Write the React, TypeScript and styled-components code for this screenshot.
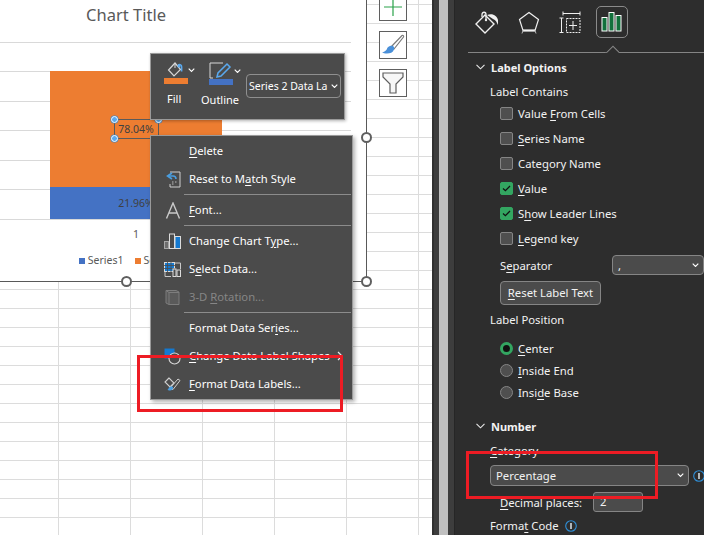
import React from "react";
import styled, { createGlobalStyle } from "styled-components";

const GlobalStyle = createGlobalStyle`
  html, body {
    margin: 0;
    padding: 0;
    width: 704px;
    height: 535px;
    overflow: hidden;
    background: #2d2d2d;
  }
  * { box-sizing: border-box; }
`;

const uiFont = `"Noto Sans", "Open Sans", sans-serif`;

const Page = styled.div`
  display: flex;
  width: 704px;
  height: 535px;
  overflow: hidden;
  position: relative;
  font-family: ${uiFont};
  font-size: 12px;
`;

/* spreadsheet side */
const Sheet = styled.div`
  position: relative;
  width: 432px;
  height: 535px;
  flex: none;
  overflow: hidden;
  background-color: #fff;
  background-image: linear-gradient(#dcdcdc 1px, transparent 1px),
    linear-gradient(90deg, #dcdcdc 1px, transparent 1px);
  background-size: 72px 19px;
  background-position: 0 4px, 58px 0;
`;

const Chart = styled.div`
  position: absolute;
  left: -115px;
  top: -10px;
  width: 482px;
  height: 292px;
  background: #fff;
  border: 1px solid #595959;
  display: flex;
  flex-direction: column;
  color: #595959;
`;

const ChartTitle = styled.div`
  height: 51px;
  padding-top: 10px;
  line-height: 28px;
  text-align: center;
  font-size: 16.5px;
`;

const Plot = styled.div`
  width: 465px;
  height: 178px;
  padding: 29px 0 0 164px;
  background: repeating-linear-gradient(#d9d9d9 0 1px, transparent 1px 29.5px);
  border-bottom: 1px solid #d9d9d9;
`;

const BarStack = styled.div`
  width: 172px;
  height: 148px;
  display: flex;
  flex-direction: column;
`;

const BarSegment = styled.div<{ $color: string; $height: number }>`
  height: ${(p) => p.$height}px;
  background: ${(p) => p.$color};
  display: flex;
  align-items: center;
  justify-content: center;
  color: #404040;
  font-size: 10.5px;
`;

const DataLabel = styled.div`
  position: relative;
  width: 45px;
  height: 20px;
  border: 1px solid #5a5a5a;
  display: flex;
  align-items: center;
  justify-content: center;
`;

const LabelHandle = styled.span<{ $x: number; $y: number }>`
  position: absolute;
  left: ${(p) => p.$x}px;
  top: ${(p) => p.$y}px;
  width: 7px;
  height: 7px;
  border-radius: 50%;
  background: #5aa9ee;
  border: 1px solid #fff;
  box-shadow: 0 0 0 0.5px #3a80c0;
`;

const AxisLabel = styled.div`
  width: 172px;
  margin-left: 164px;
  margin-top: 7px;
  text-align: center;
  font-size: 10.5px;
  line-height: 15px;
`;

const Legend = styled.div`
  display: flex;
  justify-content: center;
  gap: 11px;
  margin-top: 11px;
  padding-left: 6px;
  font-size: 10.5px;
  line-height: 15px;
`;

const LegendItem = styled.div`
  display: flex;
  align-items: center;
  gap: 3px;
`;

const Swatch = styled.span<{ $color: string }>`
  width: 6px;
  height: 6px;
  background: ${(p) => p.$color};
`;

const ChartHandle = styled.span<{ $x: number; $y: number }>`
  position: absolute;
  left: ${(p) => p.$x}px;
  top: ${(p) => p.$y}px;
  width: 11px;
  height: 11px;
  border-radius: 50%;
  background: #fff;
  border: 2px solid #5f5f5f;
`;

const SideButtons = styled.div`
  position: absolute;
  left: 379px;
  top: -7px;
  display: flex;
  flex-direction: column;
  gap: 10px;
`;

const SideButton = styled.div`
  width: 28px;
  height: 28px;
  background: #fff;
  border: 1px solid #5f5f5f;
  display: flex;
  align-items: center;
  justify-content: center;
`;

const MiniToolbar = styled.div`
  position: absolute;
  left: 150px;
  top: 53px;
  width: 195px;
  height: 67px;
  background: #4b4b4b;
  border: 1px solid #9a9a9a;
  box-shadow: 1px 1px 3px rgba(0, 0, 0, 0.3);
  display: flex;
  align-items: flex-start;
  padding: 8px 0 0 13px;
  color: #fff;
`;

const ToolBlock = styled.div<{ $width: number }>`
  width: ${(p) => p.$width}px;
  display: flex;
  flex-direction: column;
  align-items: flex-start;
`;

const ToolIconRow = styled.div<{ $gap: number; $indent: number }>`
  display: flex;
  align-items: center;
  gap: ${(p) => p.$gap}px;
  margin-left: ${(p) => p.$indent}px;
`;

const ColorBar = styled.span<{ $color: string }>`
  width: 24px;
  height: 6px;
  margin-top: -1px;
  background: ${(p) => p.$color};
`;

const ToolLabel = styled.span<{ $indent: number }>`
  margin: 6px 0 0 ${(p) => p.$indent}px;
  line-height: 18px;
  font-size: 11px;
  white-space: nowrap;
`;

const ToolCombo = styled.div`
  width: 95px;
  height: 24px;
  margin-top: 12px;
  border: 1px solid #8f8f8f;
  border-radius: 4px;
  display: flex;
  align-items: center;
  padding: 0 4px 0 2px;
  font-size: 10.5px;
  gap: 3px;
`;

const ComboText = styled.span`
  flex: 1;
  white-space: nowrap;
`;

const ContextMenu = styled.div`
  position: absolute;
  left: 150px;
  top: 135px;
  width: 203px;
  height: 265px;
  background: #4b4b4b;
  border: 1px solid #9a9a9a;
  box-shadow: 2px 2px 4px rgba(0, 0, 0, 0.3);
  padding: 1px 0;
  color: #fff;
  font-size: 11.25px;
`;

const MenuRow = styled.div<{ $disabled?: boolean }>`
  height: 28px;
  display: flex;
  align-items: center;
  color: ${(p) => (p.$disabled ? "#868686" : "#fff")};
`;

const MenuIcon = styled.span`
  width: 38px;
  flex: none;
  display: flex;
  justify-content: center;
  padding-left: 5px;
`;

const MenuText = styled.span`
  flex: 1;
  margin-top: -2px;
  white-space: nowrap;
`;

const MenuRule = styled.div`
  height: 1px;
  margin: 1px 1px 1px 33px;
  background: #8c8c8c;
`;

const Key = styled.u`
  text-underline-offset: 2px;
  text-decoration-thickness: 1px;
`;

const Callout = styled.div<{ $x: number; $y: number; $w: number; $h: number }>`
  position: absolute;
  left: ${(p) => p.$x}px;
  top: ${(p) => p.$y}px;
  width: ${(p) => p.$w}px;
  height: ${(p) => p.$h}px;
  border: 3px solid #ed1c24;
  pointer-events: none;
`;

/* divider between sheet and pane */
const Gutter = styled.div`
  width: 23px;
  flex: none;
  display: flex;
`;

const GutterBand = styled.div<{ $width: number; $color: string }>`
  width: ${(p) => p.$width}px;
  background: ${(p) => p.$color};
`;

/* format pane */
const Pane = styled.div`
  flex: 1;
  height: 535px;
  overflow: hidden;
  background: #2d2d2d;
  color: #f2f2f2;
  display: flex;
  flex-direction: column;
  font-size: 11.3px;
`;

const TabBar = styled.div`
  position: relative;
  height: 53px;
  flex: none;
  margin-left: 13px;
  border-bottom: 1px solid #858585;
  display: flex;
  align-items: flex-start;
`;

const TabIcon = styled.div<{ $width: number; $active?: boolean }>`
  width: ${(p) => p.$width}px;
  height: 32px;
  margin-top: 6px;
  margin-left: ${(p) => (p.$active ? 10 : 0)}px;
  display: flex;
  align-items: center;
  justify-content: center;
  border: 1px solid ${(p) => (p.$active ? "#8a8a8a" : "transparent")};
  border-radius: 5px;
`;

const TabNotch = styled.span`
  position: absolute;
  left: 137px;
  bottom: -1px;
  width: 14px;
  height: 9px;
  overflow: hidden;
  &::before {
    content: "";
    position: absolute;
    left: 2px;
    top: 4px;
    width: 10px;
    height: 10px;
    background: #2d2d2d;
    border: 1px solid #858585;
    transform: rotate(45deg);
  }
`;

const SectionHead = styled.div<{ $top: number }>`
  height: 20px;
  flex: none;
  margin-top: ${(p) => p.$top}px;
  padding: 0 0 2px 21px;
  display: flex;
  align-items: center;
  gap: 6px;
  font-weight: 700;
  font-size: 11px;
`;

const SubLabel = styled.div<{ $top: number }>`
  height: 17px;
  flex: none;
  line-height: 15px;
  margin-top: ${(p) => p.$top}px;
  padding-left: 35px;
`;

const OptionList = styled.div<{ $top?: number }>`
  flex: none;
  margin-top: ${(p) => p.$top ?? 0}px;
`;

const OptionRow = styled.div<{ $height: number }>`
  height: ${(p) => p.$height}px;
  padding: 0 0 1px 45px;
  display: flex;
  align-items: center;
  gap: 5px;
`;

const CheckBox = styled.span<{ $checked?: boolean }>`
  width: 13px;
  height: 13px;
  border-radius: 2px;
  display: flex;
  align-items: center;
  justify-content: center;
  background: ${(p) => (p.$checked ? "#33a661" : "#4f4f4f")};
  border: 1px solid ${(p) => (p.$checked ? "#33a661" : "#858585")};
`;

const Radio = styled.span<{ $checked?: boolean }>`
  width: 13px;
  height: 13px;
  border-radius: 50%;
  background: ${(p) => (p.$checked ? "#111" : "#4f4f4f")};
  border: ${(p) => (p.$checked ? "3px solid #33a661" : "1px solid #858585")};
`;

const FieldRow = styled.div<{ $top: number; $height: number }>`
  height: ${(p) => p.$height}px;
  flex: none;
  margin-top: ${(p) => p.$top}px;
  padding-left: 45px;
  display: flex;
  align-items: center;
`;

const FieldName = styled.span<{ $width: number }>`
  width: ${(p) => p.$width}px;
  flex: none;
`;

const Dropdown = styled.div<{ $width: number }>`
  width: ${(p) => p.$width}px;
  height: 100%;
  flex: none;
  background: #4b4b4b;
  border: 1px solid #858585;
  border-radius: 4px;
  display: flex;
  align-items: center;
  justify-content: space-between;
  padding: 0 4px 0 5px;
`;

const ResetButton = styled.div`
  width: 101px;
  height: 100%;
  padding-bottom: 2px;
  background: #4b4b4b;
  border: 1px solid #858585;
  border-radius: 4px;
  display: flex;
  align-items: center;
  justify-content: center;
  white-space: nowrap;
`;

const CategoryRow = styled.div`
  height: 21px;
  flex: none;
  margin-top: 5px;
  padding-left: 35px;
  display: flex;
  align-items: center;
  gap: 4px;
`;

const NumberInput = styled.div`
  width: 50px;
  height: 100%;
  background: #4b4b4b;
  border: 1px solid #858585;
  border-radius: 3px;
  padding-left: 6px;
  line-height: 18px;
`;

const InfoRow = styled.div`
  height: 17px;
  flex: none;
  margin-top: 5px;
  padding-left: 35px;
  display: flex;
  align-items: center;
  gap: 6px;
`;

const Chevron = ({ color = "#fff", size = 7 }: { color?: string; size?: number }) => (
  <svg width={size} height={size * 0.6} viewBox="0 0 10 6" style={{ flex: "none" }}>
    <path d="M1 1l4 4 4-4" fill="none" stroke={color} strokeWidth="1.6" />
  </svg>
);

const SectionChevron = () => (
  <svg width="9" height="6" viewBox="0 0 9 6" style={{ flex: "none" }}>
    <path d="M.5.8l4 4 4-4" fill="none" stroke="#e8e8e8" strokeWidth="1.1" />
  </svg>
);

const Info = ({ size = 12 }: { size?: number }) => (
  <svg width={size} height={size} viewBox="0 0 12 12" style={{ flex: "none" }}>
    <circle cx="6" cy="6" r="5.3" fill="none" stroke="#2f8fd8" strokeWidth="1.1" />
    <path d="M6 3v6" stroke="#e8f2fa" strokeWidth="1.4" />
  </svg>
);

const Tick = () => (
  <svg width="9" height="7" viewBox="0 0 9 7">
    <path d="M1 3.5l2.4 2.2L8 1" fill="none" stroke="#111" strokeWidth="1.3" />
  </svg>
);

const FillBucket = () => (
  <svg width="18" height="17" viewBox="0 0 18 17">
    <path d="M8 1L1.5 8 7 14l6.5-6.5z" fill="none" stroke="#d8d8d8" strokeWidth="1.2" />
    <path d="M8 1v5" stroke="#d8d8d8" strokeWidth="1" />
    <path d="M11 3c2.2-1 3.6 0 3.6 2v4.5" fill="none" stroke="#5aa9ee" strokeWidth="1.6" />
    <circle cx="12" cy="4" r="1.5" fill="#5aa9ee" />
  </svg>
);

const OutlinePen = () => (
  <svg width="24" height="18" viewBox="0 0 24 18">
    <path d="M14 1H1v15h3" fill="none" stroke="#d8d8d8" strokeWidth="1" />
    <path d="M8 15l1-4L18 2l3 3-9 9z" fill="#4b4b4b" stroke="#5aa9ee" strokeWidth="1.5" />
  </svg>
);

const ResetIcon = () => (
  <svg width="16" height="17" viewBox="0 0 16 17">
    <path d="M5 1h10v15H5v-3" fill="none" stroke="#cfcfcf" strokeWidth="1" />
    <path d="M7 2L2.5 5 7 8" fill="none" stroke="#4a9ee0" strokeWidth="1.6" />
    <path d="M3 5h5c2 0 3 1 3 3" fill="none" stroke="#4a9ee0" strokeWidth="1.6" />
    <path d="M7 11h1.5M10 11h1.5M7 13h1.5" stroke="#bdbdbd" strokeWidth="1" />
  </svg>
);

const FontIcon = () => (
  <svg width="16" height="17" viewBox="0 0 16 17">
    <path d="M1.5 16.5L8 1l6.5 15.5M4 11h8" fill="none" stroke="#c9c9c9" strokeWidth="1.4" />
  </svg>
);

const ChartTypeIcon = () => (
  <svg width="17" height="16" viewBox="0 0 17 16">
    <rect x="0.5" y="8.5" width="4" height="7" fill="#6e6e6e" stroke="#a8a8a8" />
    <rect x="5.5" y="1" width="5" height="14.5" fill="#4b4b4b" stroke="#dcdcdc" />
    <rect x="11" y="3.5" width="5.5" height="12" fill="#1479d0" stroke="#dcdcdc" />
  </svg>
);

const SelectDataIcon = () => (
  <svg width="17" height="15" viewBox="0 0 17 15">
    <rect x="0.5" y="0.5" width="10" height="9" fill="#1479d0" stroke="#dcdcdc" />
    <path d="M0 3.5h11M0 6.5h11M3.5 0v10M7 0v10" stroke="#4b4b4b" strokeWidth="0.8" />
    <path d="M11 1h5.5v6M1 10v4.5h6" fill="none" stroke="#c9c9c9" />
    <rect x="9" y="7" width="3" height="7.5" fill="#4b4b4b" stroke="#dcdcdc" />
    <rect x="13" y="8" width="3.5" height="6.5" fill="#4b4b4b" stroke="#dcdcdc" />
  </svg>
);

const RotationIcon = () => (
  <svg width="15" height="16" viewBox="0 0 15 16">
    <path d="M1 1.5h10l3 1.5v12.5H4L1 14z" fill="#5a5a5a" stroke="#7d7d7d" />
    <path d="M1 1.5L4 3.5h10M4 3.5v12" fill="none" stroke="#7d7d7d" />
  </svg>
);

const ShapesIcon = () => (
  <svg width="17" height="17" viewBox="0 0 17 17">
    <rect x="0.5" y="0.5" width="10" height="10" fill="#1479d0" />
    <circle cx="10.5" cy="10.5" r="5.5" fill="#4b4b4b" stroke="#d8d8d8" strokeWidth="1.1" />
  </svg>
);

const LabelsIcon = () => (
  <svg width="17" height="15" viewBox="0 0 17 15">
    <path d="M5 1L1 5l5 5 4-4z" fill="none" stroke="#d0d0d0" strokeWidth="1.1" />
    <path d="M6 11l8-9 2 1.5-7 9z" fill="none" stroke="#d0d0d0" strokeWidth="1" />
    <path d="M4.500 11.500c1-2 3-2.500 4.500-1.500.5 1.500-1 3.500-3 3.500-1 0-2.500-.5-2.500-.5z" fill="#4a9ee0" />
  </svg>
);

const PaneBucket = () => (
  <svg width="24" height="23" viewBox="0 0 24 23">
    <path d="M10 4L1 13l9 9 9-9z" fill="none" stroke="#f0f0f0" strokeWidth="1.4" />
    <path d="M7 6V3.500C7 .5 11 .5 11 3.500V8" fill="none" stroke="#f0f0f0" strokeWidth="1.300" />
    <circle cx="11" cy="9" r="1.200" fill="#f0f0f0" />
    <path d="M12 4c6-2 10 1 11 5v5c-1.500-3-2-5-5-6z" fill="#f0f0f0" />
  </svg>
);

const PanePentagon = () => (
  <svg width="22" height="23" viewBox="0 0 22 23">
    <path d="M11 1.500L20.500 8.500 17 19.500H5L1.500 8.500z" fill="none" stroke="#f0f0f0" strokeWidth="1.200" />
    <path d="M5 19.500h12" stroke="#f0f0f0" strokeWidth="2.200" />
    <path d="M5 19.500L4 22.500M17 19.500l1 3" stroke="#bdbdbd" strokeWidth="1" />
  </svg>
);

const PaneSize = () => (
  <svg width="22" height="22" viewBox="0 0 22 22">
    <path d="M4 .5v4M21 .5v4M4 2.500h17" fill="none" stroke="#f0f0f0" />
    <path d="M.5 7h4M.5 21.500h4M2.500 7v14.500" fill="none" stroke="#f0f0f0" />
    <rect x="7.500" y="7.500" width="13.500" height="14" fill="none" stroke="#f0f0f0" strokeDasharray="2 1" />
    <path d="M14 10v9M10 14.500h8" stroke="#f0f0f0" />
  </svg>
);

const PaneBars = () => (
  <svg width="22" height="22" viewBox="0 0 22 22">
    <rect x="1" y="6.500" width="5" height="13.500" fill="#12703c" stroke="#fff" />
    <rect x="8" y="1.500" width="5" height="18.500" fill="#12703c" stroke="#fff" />
    <rect x="15" y="4.500" width="5" height="15.500" fill="#12703c" stroke="#fff" />
  </svg>
);

export default function App() {
  return (
    <Page>
      <GlobalStyle />
      <Sheet>
        <Chart>
          <ChartTitle>Chart Title</ChartTitle>
          <Plot>
            <BarStack>
              <BarSegment $color="#ed7d31" $height={116}>
                <DataLabel>
                  78.04%
                  <LabelHandle $x={-4} $y={-4} />
                  <LabelHandle $x={40} $y={-4} />
                  <LabelHandle $x={-4} $y={15} />
                </DataLabel>
              </BarSegment>
              <BarSegment $color="#4472c4" $height={32}>21.96%</BarSegment>
            </BarStack>
          </Plot>
          <AxisLabel>1</AxisLabel>
          <Legend>
            <LegendItem>
              <Swatch $color="#4472c4" />
              Series1
            </LegendItem>
            <LegendItem>
              <Swatch $color="#ed7d31" />
              Series2
            </LegendItem>
          </Legend>
          <ChartHandle $x={475} $y={141} />
          <ChartHandle $x={475} $y={285} />
          <ChartHandle $x={235} $y={285} />
        </Chart>

        <SideButtons>
          <SideButton>
            <svg width="18" height="18" viewBox="0 0 18 18">
              <path d="M9 0v18M0 9h18" stroke="#2aa24a" strokeWidth="1.2" />
            </svg>
          </SideButton>
          <SideButton>
            <svg width="24" height="22" viewBox="0 0 24 22">
              <path d="M10 13L21 1.500c1-.5 2 .5 1.500 1.500L13 15z" fill="#fff" stroke="#7a7a7a" strokeWidth="1.200" />
              <path d="M9 12c3-1 5 1 4 3.500-1 3-4 4-7 4-2 0-4-.5-5-1 2-.5 4-1.500 5-3.500 0-1.500 1.500-2.500 3-3z" fill="#4a90d9" />
            </svg>
          </SideButton>
          <SideButton>
            <svg width="22" height="22" viewBox="0 0 22 22">
              <path d="M1 1h20v4l-7 7v9H8v-9L1 5z" fill="#f7f7f7" stroke="#5f5f5f" strokeWidth="1.200" />
            </svg>
          </SideButton>
        </SideButtons>

        <MiniToolbar>
          <ToolBlock $width={45}>
            <ToolIconRow $gap={3} $indent={3}>
              <FillBucket />
              <Chevron />
            </ToolIconRow>
            <ColorBar $color="#ed7d31" />
            <ToolLabel $indent={3}>Fill</ToolLabel>
          </ToolBlock>
          <ToolBlock $width={37}>
            <ToolIconRow $gap={1} $indent={0}>
              <OutlinePen />
              <Chevron />
            </ToolIconRow>
            <ColorBar $color="#4472c4" />
            <ToolLabel $indent={-8}>Outline</ToolLabel>
          </ToolBlock>
          <ToolCombo>
            <ComboText>Series 2 Data La</ComboText>
            <Chevron />
          </ToolCombo>
        </MiniToolbar>

        <ContextMenu>
          <MenuRow>
            <MenuIcon />
            <MenuText><Key>D</Key>elete</MenuText>
          </MenuRow>
          <MenuRow>
            <MenuIcon><ResetIcon /></MenuIcon>
            <MenuText>Reset to M<Key>a</Key>tch Style</MenuText>
          </MenuRow>
          <MenuRule />
          <MenuRow>
            <MenuIcon><FontIcon /></MenuIcon>
            <MenuText><Key>F</Key>ont...</MenuText>
          </MenuRow>
          <MenuRule />
          <MenuRow>
            <MenuIcon><ChartTypeIcon /></MenuIcon>
            <MenuText>Change Chart T<Key>y</Key>pe...</MenuText>
          </MenuRow>
          <MenuRow>
            <MenuIcon><SelectDataIcon /></MenuIcon>
            <MenuText>S<Key>e</Key>lect Data...</MenuText>
          </MenuRow>
          <MenuRow $disabled>
            <MenuIcon><RotationIcon /></MenuIcon>
            <MenuText>3-D <Key>R</Key>otation...</MenuText>
          </MenuRow>
          <MenuRule />
          <MenuRow>
            <MenuIcon />
            <MenuText>Format Data Ser<Key>i</Key>es...</MenuText>
          </MenuRow>
          <MenuRow>
            <MenuIcon><ShapesIcon /></MenuIcon>
            <MenuText><Key>C</Key>hange Data Label Shapes</MenuText>
            <svg width="6" height="10" viewBox="0 0 6 10" style={{ marginRight: 9 }}>
              <path d="M1 1l4 4-4 4" fill="none" stroke="#e8e8e8" strokeWidth="1.200" />
            </svg>
          </MenuRow>
          <MenuRow>
            <MenuIcon><LabelsIcon /></MenuIcon>
            <MenuText><Key>F</Key>ormat Data Labels...</MenuText>
          </MenuRow>
        </ContextMenu>
      </Sheet>

      <Gutter>
        <GutterBand $width={2} $color="#303030" />
        <GutterBand $width={5} $color="#3d3d3d" />
        <GutterBand $width={9} $color="#c0c0c0" />
        <GutterBand $width={6} $color="#3d3d3d" />
        <GutterBand $width={1} $color="#262626" />
      </Gutter>

      <Pane>
        <TabBar>
          <TabIcon $width={37}><PaneBucket /></TabIcon>
          <TabIcon $width={48}><PanePentagon /></TabIcon>
          <TabIcon $width={33}><PaneSize /></TabIcon>
          <TabIcon $width={32} $active><PaneBars /></TabIcon>
          <TabNotch />
        </TabBar>

        <SectionHead $top={5}><SectionChevron />Label Options</SectionHead>
        <SubLabel $top={6}>Label Contains</SubLabel>
        <OptionList>
          <OptionRow $height={25}><CheckBox /><span>Value <Key>F</Key>rom Cells</span></OptionRow>
          <OptionRow $height={25}><CheckBox /><span><Key>S</Key>eries Name</span></OptionRow>
          <OptionRow $height={25}><CheckBox /><span>Cate<Key>g</Key>ory Name</span></OptionRow>
          <OptionRow $height={25}><CheckBox $checked><Tick /></CheckBox><span><Key>V</Key>alue</span></OptionRow>
          <OptionRow $height={25}><CheckBox $checked><Tick /></CheckBox><span>S<Key>h</Key>ow Leader Lines</span></OptionRow>
          <OptionRow $height={25}><CheckBox /><span><Key>L</Key>egend key</span></OptionRow>
        </OptionList>

        <FieldRow $top={4} $height={20}>
          <FieldName $width={112}>S<Key>e</Key>parator</FieldName>
          <Dropdown $width={92}>
            <span>,</span>
            <Chevron />
          </Dropdown>
        </FieldRow>
        <FieldRow $top={6} $height={24}>
          <ResetButton><span><Key>R</Key>eset Label Text</span></ResetButton>
        </FieldRow>

        <SubLabel $top={7}>Label Position</SubLabel>
        <OptionList $top={9}>
          <OptionRow $height={22}><Radio $checked /><span><Key>C</Key>enter</span></OptionRow>
          <OptionRow $height={22}><Radio /><span><Key>I</Key>nside End</span></OptionRow>
          <OptionRow $height={22}><Radio /><span>Insi<Key>d</Key>e Base</span></OptionRow>
        </OptionList>

        <SectionHead $top={13}><SectionChevron />Number</SectionHead>
        <SubLabel $top={6}><Key>C</Key>ategory</SubLabel>
        <CategoryRow>
          <Dropdown $width={199}>
            <span>Percentage</span>
            <Chevron />
          </Dropdown>
          <Info />
        </CategoryRow>
        <FieldRow $top={6} $height={20}>
          <FieldName $width={93}><Key>D</Key>ecimal places:</FieldName>
          <NumberInput>2</NumberInput>
        </FieldRow>
        <InfoRow>
          <span>Forma<Key>t</Key> Code</span>
          <Info />
        </InfoRow>
      </Pane>

      <Callout $x={137} $y={355} $w={206} $h={57} />
      <Callout $x={466} $y={451} $w={192} $h={48} />
    </Page>
  );
}
